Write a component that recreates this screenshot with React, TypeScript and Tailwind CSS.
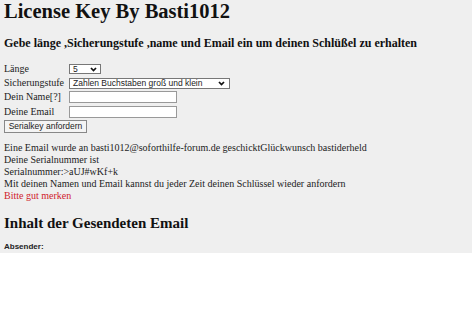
import React from 'react';

const serif = { fontFamily: '"Liberation Serif", "Times New Roman", serif' };
const sans = { fontFamily: '"Liberation Sans", Arial, sans-serif' };

const App: React.FC = () => {
    return (
        <div className="w-[474px] h-[329px] bg-white text-black" style={serif}>
            <div className="w-[472px] h-[253px] bg-[#efefef] px-[4px] overflow-hidden">
                <h1 className="text-[20.5px] leading-[20px] font-bold pt-[1px] text-[#111]">License Key By Basti1012</h1>
                <h2 className="text-[12px] leading-[14px] font-bold mt-[15px] text-[#111] whitespace-nowrap">
                    Gebe länge ,Sicherungstufe ,name und Email ein um deinen Schlüßel zu erhalten
                </h2>
                <div className="mt-[12px] text-[10px] leading-[12px] text-[#222] whitespace-nowrap">
                    <div className="flex items-center h-[14px]">
                        <span className="w-[65px]">Länge</span>
                        <div className="flex items-center justify-between w-[32px] h-[10px] border border-[#777] bg-white pl-[3px] pr-[3px] text-[8.5px] leading-[10px]" style={sans}>
                            <span>5</span>
                            <Chevron />
                        </div>
                    </div>
                    <div className="flex items-center h-[14px]">
                        <span className="w-[65px]">Sicherungstufe</span>
                        <div className="flex items-center justify-between w-[161px] h-[11px] border border-[#777] bg-white pl-[3px] pr-[4px] text-[8.5px] leading-[10px]" style={sans}>
                            <span>Zahlen Buchstaben groß und klein</span>
                            <Chevron />
                        </div>
                    </div>
                    <div className="flex items-center h-[14px]">
                        <span className="w-[65px]">Dein Name[?]</span>
                        <div className="w-[108px] h-[12px] border border-[#999] bg-white" />
                    </div>
                    <div className="flex items-center h-[15px]">
                        <span className="w-[65px]">Deine Email</span>
                        <div className="w-[108px] h-[12px] border border-[#999] bg-white" />
                    </div>
                    <button className="mt-[1px] block h-[13px] w-[83px] border border-[#888] bg-[#f4f4f4] text-[8.5px] leading-[11px] text-[#222]" style={sans}>
                        Serialkey anfordern
                    </button>
                </div>
                <div className="mt-[9px] text-[10px] leading-[12px] text-[#222] whitespace-nowrap">
                    <p>Eine Email wurde an basti1012@soforthilfe-forum.de geschicktGlückwunsch bastiderheld</p>
                    <p>Deine Serialnummer ist</p>
                    <p>Serialnummer:&gt;aUJ#wKf+k</p>
                    <p>Mit deinen Namen und Email kannst du jeder Zeit deinen Schlüssel wieder anfordern</p>
                    <p className="text-[#d01c2c]">Bitte gut merken</p>
                </div>
                <h2 className="mt-[12px] text-[15px] leading-[18px] font-bold text-[#111]">Inhalt der Gesendeten Email</h2>
                <p className="mt-[10px] text-[8px] leading-[9px] font-bold text-[#222]" style={sans}>Absender:</p>
            </div>
        </div>
    );
};

const Chevron: React.FC = () => (
    <svg width="7" height="5" viewBox="0 0 7 5" className="shrink-0">
        <path d="M1 1 L3.5 3.6 L6 1" stroke="#111" strokeWidth="1.7" fill="none" />
    </svg>
);

export default App;
